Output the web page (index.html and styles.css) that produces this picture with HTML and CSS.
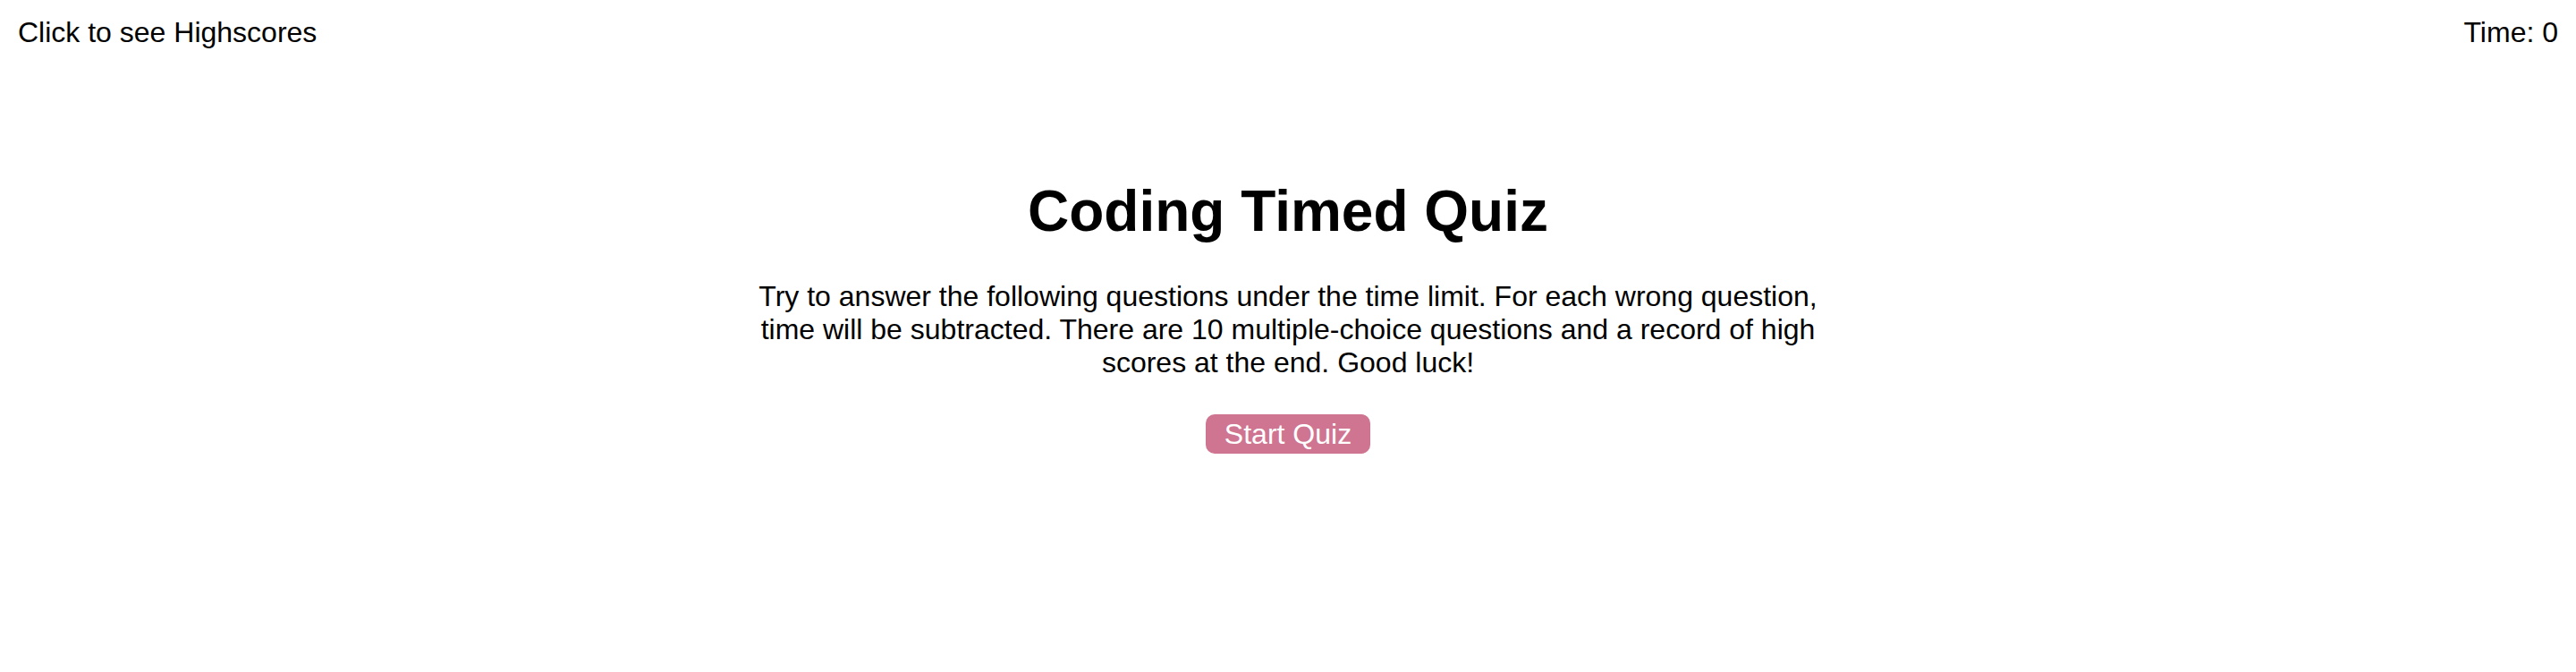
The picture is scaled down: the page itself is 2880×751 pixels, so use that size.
FILE: index.html
```html
<!DOCTYPE html>
<html lang="en">
<head>
<meta charset="utf-8">
<title>Coding Timed Quiz</title>
<link rel="stylesheet" href="styles.css">
</head>
<body>
<header class="topbar">
  <a class="highscores-link">Click to see Highscores</a>
  <div class="timer">Time: 0</div>
</header>
<main class="intro">
  <h1 class="title">Coding Timed Quiz</h1>
  <p class="description">Try to answer the following questions under the time limit. For each wrong question, time will be subtracted. There are 10 multiple-choice questions and a record of high scores at the end. Good luck!</p>
  <button class="start-btn" type="button">Start Quiz</button>
</main>
</body>
</html>
```

FILE: styles.css
```css
html, body {
  margin: 0;
  padding: 0;
  background: #ffffff;
  color: #000000;
  font-family: "Liberation Sans", Arial, Helvetica, sans-serif;
}

.topbar {
  display: flex;
  justify-content: space-between;
  align-items: flex-start;
  padding: 18px 20px 0 20px;
  font-size: 32px;
  line-height: normal;
}

.highscores-link {
  color: #000000;
  cursor: pointer;
}

.timer {
  color: #000000;
}

.intro {
  display: flex;
  flex-direction: column;
  align-items: center;
  text-align: center;
}

.title {
  margin: 144px 0 0 0;
  font-size: 64px;
  font-weight: bold;
  line-height: normal;
}

.description {
  width: 1200px;
  margin: 40px 0 0 0;
  font-size: 32px;
  line-height: normal;
}

.start-btn {
  margin-top: 39px;
  height: 44px;
  padding: 0 21px;
  border: none;
  border-radius: 10px;
  background: #cf7591;
  color: #ffffff;
  font-family: "Liberation Sans", Arial, Helvetica, sans-serif;
  font-size: 32px;
  line-height: 44px;
  cursor: pointer;
}
```
